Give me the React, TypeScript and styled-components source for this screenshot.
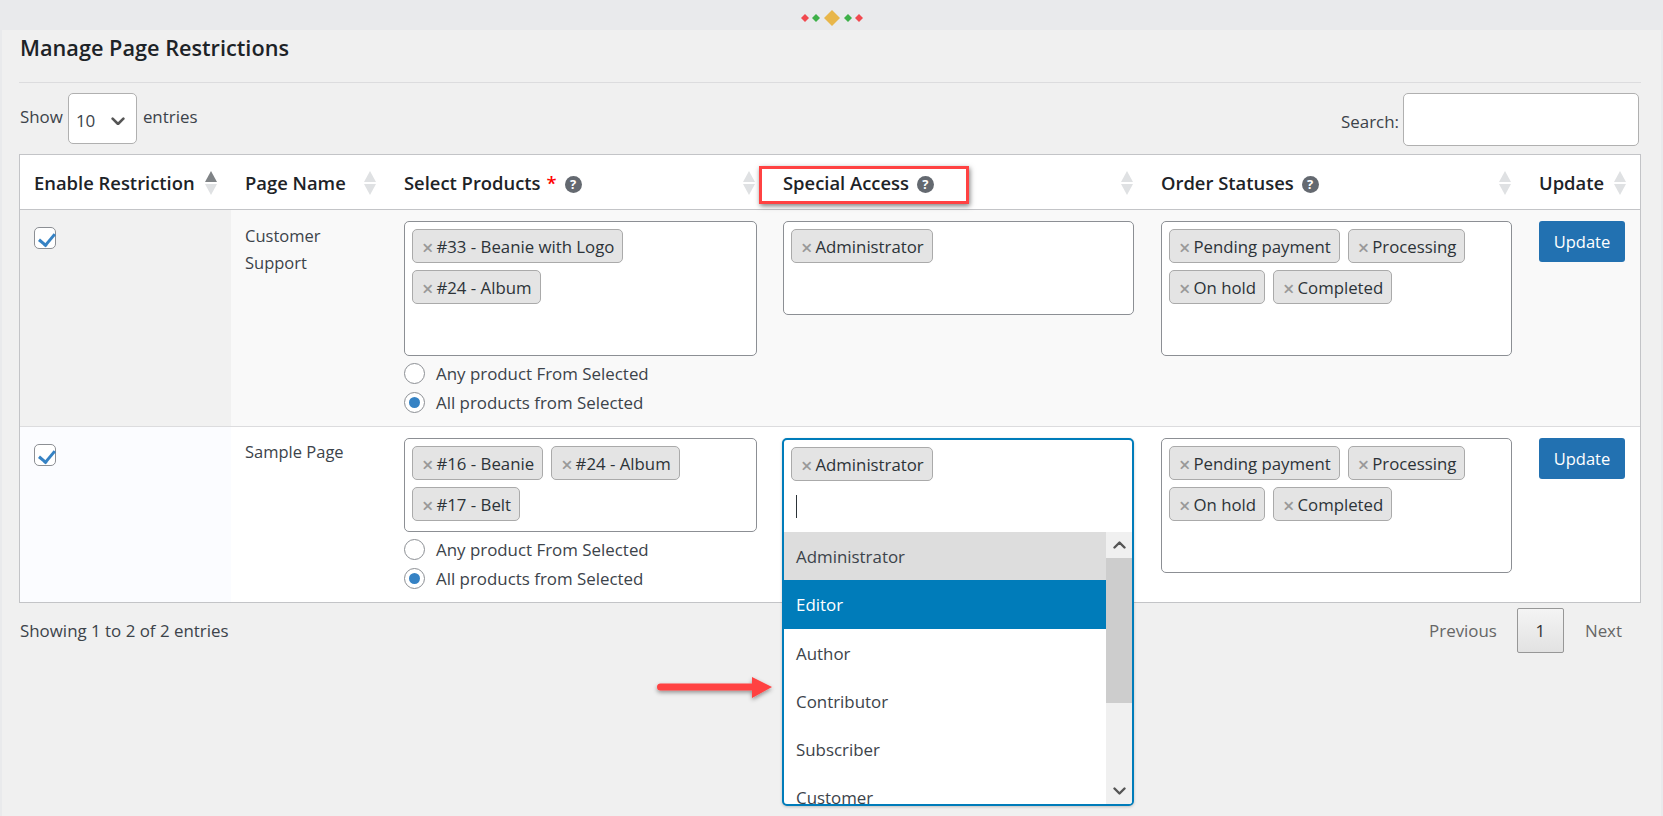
import React from 'react';
import styled, { createGlobalStyle } from 'styled-components';

const GlobalStyle = createGlobalStyle`
  * { box-sizing: border-box; }
  body {
    margin: 0;
    background: #f0f0f1;
    font-family: "Open Sans", "Noto Sans", sans-serif;
    color: #3c434a;
  }
`;

const Page = styled.div`
  position: relative;
  width: 1663px;
  height: 816px;
  overflow: hidden;
  background: #f0f0f0;
  border-left: 2px solid #e9eaec;
  border-right: 2px solid #e9eaec;
`;

const TopBar = styled.div`
  height: 30px;
  margin: 0 -2px;
  background: #e9eaec;
  display: flex;
  align-items: center;
  justify-content: center;
  padding-top: 6px;
`;

const Content = styled.div`
  padding: 0 20px 0 17px;
`;

const Title = styled.h1`
  margin: 0;
  height: 53px;
  padding: 4px 0 0 1px;
  font-size: 21.7px;
  line-height: 28px;
  font-weight: 600;
  color: #1d2327;
  border-bottom: 1px solid #dcdcde;
`;

const Toolbar = styled.div`
  display: flex;
  justify-content: space-between;
  height: 71px;
  padding: 10px 0 0 1px;
  font-size: 16.9px;
`;

const LengthControl = styled.div`
  display: flex;
  align-items: flex-start;
  gap: 5px;
  line-height: 48px;
`;

const LengthSelect = styled.div`
  width: 69px;
  height: 51px;
  margin-right: 1px;
  padding: 5px 11px 0 7px;
  background: #fff;
  border: 1px solid #b0b0b0;
  border-radius: 5px;
  display: flex;
  align-items: center;
  justify-content: space-between;
  line-height: 20px;
  font-size: 17px;
`;

const SearchControl = styled.label`
  display: flex;
  align-items: flex-start;
  gap: 4px;
  line-height: 58px;
`;

const SearchInput = styled.input`
  width: 236px;
  height: 53px;
  margin-right: 2px;
  background: #fff;
  border: 1px solid #b0b0b0;
  border-radius: 5px;
`;

const TableFrame = styled.div`
  width: 1622px;
  border: 1px solid #c3c4c7;
  background: #fff;
`;

const Table = styled.table`
  width: 1620px;
  table-layout: fixed;
  border-collapse: separate;
  border-spacing: 0;
`;

const HeadCell = styled.th`
  height: 55px;
  padding: 1px 14px 0;
  border-bottom: 1px solid #c3c4c7;
  text-align: left;
  font-size: 18.4px;
  font-weight: 600;
  color: #1d2327;
`;

const HeadInner = styled.div`
  display: flex;
  align-items: center;
  justify-content: space-between;
`;

const HeadLabel = styled.span`
  display: flex;
  align-items: center;
  white-space: nowrap;
`;

const Required = styled.span`
  color: #f00;
  margin-left: 6px;
`;

const HelpIcon = styled.span`
  width: 17px;
  height: 17px;
  margin: 3px 0 0 8px;
  border-radius: 50%;
  background: #646970;
  color: #fff;
  font-size: 13px;
  font-weight: 700;
  line-height: 17px;
  text-align: center;
`;

const Row = styled.tr<{ $first?: boolean }>`
  & > td {
    height: ${p => (p.$first ? '217px' : '175px')};
    background: ${p => (p.$first ? '#f9f9f9' : '#fff')};
    border-bottom: ${p => (p.$first ? '1px solid #dcdcde' : '0')};
  }
  & > td:first-child {
    background: ${p => (p.$first ? '#f1f1f1' : '#fbfcff')};
  }
`;

const Cell = styled.td`
  padding: 11px 12px 0 14px;
  vertical-align: top;
  font-size: 16.9px;
  &:nth-child(n + 4) {
    padding-right: 13px;
  }
`;

const Checkbox = styled.input.attrs({ type: 'checkbox' })`
  appearance: none;
  display: block;
  width: 22px;
  height: 22px;
  margin: 6px 0 0;
  border: 1px solid #8c8f94;
  border-radius: 5px;
  background: #fff;
  position: relative;
  &:checked::before {
    content: '';
    position: absolute;
    left: 7px;
    top: 2px;
    width: 7px;
    height: 13px;
    border: solid #3582c4;
    border-width: 0 3.5px 3.5px 0;
    transform: rotate(40deg);
  }
`;

const PageName = styled.div<{ $first?: boolean }>`
  margin-top: ${p => (p.$first ? '1px' : '0')};
  line-height: 27px;
  font-size: 16.5px;
`;

const SelectBox = styled.div<{ $tall?: boolean }>`
  display: flex;
  flex-wrap: wrap;
  align-content: flex-start;
  gap: 7px 8px;
  min-height: ${p => (p.$tall ? '135px' : '94px')};
  padding: 7px 8px 7px 7px;
  background: #fff;
  border: 1px solid #8c8f94;
  border-radius: 5px;
`;

const Tag = styled.span`
  display: inline-flex;
  align-items: center;
  height: 34px;
  padding: 0 8px 0 9px;
  background: #e4e4e4;
  border: 1px solid #aaa;
  border-radius: 5px;
  font-size: 16.8px;
  color: #2c3338;
  white-space: nowrap;
`;

const TagRemove = styled.span`
  margin: 3px 3px 0 0;
  color: #999;
  font-size: 20px;
  font-weight: 600;
  line-height: 1;
`;

const RadioRow = styled.label`
  display: flex;
  align-items: center;
  gap: 11px;
  height: 29px;
`;

const RadioGroup = styled.div`
  margin-top: 3px;
`;

const Radio = styled.input.attrs({ type: 'radio' })`
  appearance: none;
  flex: none;
  position: relative;
  width: 21px;
  height: 21px;
  margin: 0;
  border: 1px solid #8c8f94;
  border-radius: 50%;
  background: #fff;
  &:checked::before {
    content: '';
    position: absolute;
    left: 4px;
    top: 4px;
    width: 11px;
    height: 11px;
    border-radius: 50%;
    background: #3582c4;
  }
`;

const UpdateButton = styled.button`
  display: block;
  width: 86px;
  height: 41px;
  padding: 0;
  background: #2271b1;
  border: 0;
  border-radius: 3px;
  color: #fff;
  font-family: inherit;
  font-size: 16.5px;
`;

const DropdownAnchor = styled.div`
  position: relative;
  height: 94px;
`;

const Dropdown = styled.div`
  position: absolute;
  left: -1px;
  top: 0;
  z-index: 2;
  width: 352px;
  height: 368px;
  display: flex;
  flex-direction: column;
  background: #fff;
  border: 2px solid #007cba;
  border-radius: 5px;
  overflow: hidden;
  box-shadow: 0 1px 3px rgba(0, 0, 0, 0.2);
`;

const DropdownField = styled.div`
  height: 92px;
  flex: none;
  padding: 7px 7px 0;
`;

const Caret = styled.div`
  width: 1px;
  height: 23px;
  margin: 14px 0 0 5px;
  background: #2c3338;
`;

const DropdownBody = styled.div`
  flex: 1;
  min-height: 0;
  display: flex;
`;

const OptionList = styled.ul`
  flex: 1;
  margin: 0;
  padding: 0;
  list-style: none;
  overflow: hidden;
`;

const Option = styled.li<{ $state?: 'selected' | 'active' }>`
  height: 48.3px;
  padding-left: 12px;
  line-height: 50px;
  font-size: 16.9px;
  background: ${p =>
    p.$state === 'selected' ? '#ddd' : p.$state === 'active' ? '#007cba' : 'transparent'};
  color: ${p => (p.$state === 'active' ? '#fff' : '#3c434a')};
`;

const Scrollbar = styled.div`
  flex: none;
  width: 26px;
  display: flex;
  flex-direction: column;
  background: #f0f0f0;
`;

const ScrollButton = styled.div`
  flex: none;
  height: 26px;
  display: flex;
  align-items: center;
  justify-content: center;
`;

const ScrollThumb = styled.div`
  flex: none;
  height: 145px;
  background: #cdcdcd;
`;

const ScrollTrack = styled.div`
  flex: 1;
`;

const Footer = styled.div`
  display: flex;
  justify-content: space-between;
  padding-left: 1px;
  font-size: 16.9px;
`;

const EntriesInfo = styled.div`
  line-height: 56px;
`;

const Pagination = styled.div`
  display: flex;
  align-items: center;
  height: 50px;
  padding: 5px 19px 0 0;
  color: #666;
`;

const PageLink = styled.span`
  line-height: 44px;
`;

const CurrentPage = styled.span`
  width: 47px;
  height: 45px;
  margin: 0 21px 0 20px;
  line-height: 43px;
  text-align: center;
  color: #333;
  background: linear-gradient(to bottom, #f4f4f4, #e2e2e2);
  border: 1px solid #979797;
  border-radius: 2px;
`;

const Callout = styled.div`
  position: absolute;
  left: 757px;
  top: 166px;
  width: 210px;
  height: 38px;
  border: 3px solid #ff4242;
  box-shadow: 1px 2px 5px rgba(0, 0, 0, 0.5);
  pointer-events: none;
`;

const ArrowMark = styled.svg`
  position: absolute;
  left: 650px;
  top: 670px;
  overflow: visible;
`;

const Logo = () => (
  <svg width="64" height="16" viewBox="0 0 64 16">
    <path d="M5 4l4 4-4 4-4-4z" fill="#f1494f" />
    <path d="M16 4l4 4-4 4-4-4z" fill="#3eb049" />
    <path d="M32 0l8 8-8 8-8-8z" fill="#e8b64a" />
    <path d="M48 4l4 4-4 4-4-4z" fill="#3eb049" />
    <path d="M59 4l4 4-4 4-4-4z" fill="#f1494f" />
  </svg>
);

const SortIcon = ({ active }: { active?: boolean }) => (
  <svg width="12" height="24" viewBox="0 0 12 24">
    <path d="M6 0l6 11H0z" fill={active ? '#7f8386' : '#dfe1e3'} />
    <path d="M6 24l6-11H0z" fill="#dfe1e3" />
  </svg>
);

const Chevron = ({ up, size = 13 }: { up?: boolean; size?: number }) => (
  <svg width={size} height={size * 0.62} viewBox="0 0 13 8">
    <path
      d={up ? 'M1.5 6.5l5-5 5 5' : 'M1.5 1.5l5 5 5-5'}
      fill="none"
      stroke="#555"
      strokeWidth="2.4"
      strokeLinecap="round"
      strokeLinejoin="round"
    />
  </svg>
);

const columns = [211, 159, 379, 378, 378, 115];
const roles = ['Administrator', 'Editor', 'Author', 'Contributor', 'Subscriber', 'Customer'];
const statuses = ['Pending payment', 'Processing', 'On hold', 'Completed'];

const Pill = ({ label }: { label: string }) => (
  <Tag>
    <TagRemove>×</TagRemove>
    {label}
  </Tag>
);

const ProductMode = ({ name }: { name: string }) => (
  <RadioGroup>
    <RadioRow>
      <Radio name={name} />
      Any product From Selected
    </RadioRow>
    <RadioRow>
      <Radio name={name} defaultChecked />
      All products from Selected
    </RadioRow>
  </RadioGroup>
);

const Head = ({ label, required, help, active }: { label: string; required?: boolean; help?: boolean; active?: boolean }) => (
  <HeadCell>
    <HeadInner>
      <HeadLabel>
        {label}
        {required && <Required>*</Required>}
        {help && <HelpIcon>?</HelpIcon>}
      </HeadLabel>
      <SortIcon active={active} />
    </HeadInner>
  </HeadCell>
);

export default function App() {
  return (
    <Page>
      <GlobalStyle />
      <TopBar>
        <Logo />
      </TopBar>
      <Content>
        <Title>Manage Page Restrictions</Title>
        <Toolbar>
          <LengthControl>
            Show
            <LengthSelect>
              10
              <Chevron size={14} />
            </LengthSelect>
            entries
          </LengthControl>
          <SearchControl>
            Search:
            <SearchInput />
          </SearchControl>
        </Toolbar>
        <TableFrame>
          <Table>
            <colgroup>
              {columns.map((w, i) => (
                <col key={i} width={w} />
              ))}
            </colgroup>
            <thead>
              <tr>
                <Head label="Enable Restriction" active />
                <Head label="Page Name" />
                <Head label="Select Products" required help />
                <Head label="Special Access" help />
                <Head label="Order Statuses" help />
                <Head label="Update" />
              </tr>
            </thead>
            <tbody>
              <Row $first>
                <Cell>
                  <Checkbox defaultChecked />
                </Cell>
                <Cell>
                  <PageName $first>
                    Customer
                    <br />
                    Support
                  </PageName>
                </Cell>
                <Cell>
                  <SelectBox $tall>
                    <Pill label="#33 - Beanie with Logo" />
                    <Pill label="#24 - Album" />
                  </SelectBox>
                  <ProductMode name="mode-1" />
                </Cell>
                <Cell>
                  <SelectBox>
                    <Pill label="Administrator" />
                  </SelectBox>
                </Cell>
                <Cell>
                  <SelectBox $tall>
                    {statuses.map(s => (
                      <Pill key={s} label={s} />
                    ))}
                  </SelectBox>
                </Cell>
                <Cell>
                  <UpdateButton>Update</UpdateButton>
                </Cell>
              </Row>
              <Row>
                <Cell>
                  <Checkbox defaultChecked />
                </Cell>
                <Cell>
                  <PageName>Sample Page</PageName>
                </Cell>
                <Cell>
                  <SelectBox>
                    <Pill label="#16 - Beanie" />
                    <Pill label="#24 - Album" />
                    <Pill label="#17 - Belt" />
                  </SelectBox>
                  <ProductMode name="mode-2" />
                </Cell>
                <Cell>
                  <DropdownAnchor>
                    <Dropdown>
                      <DropdownField>
                        <Pill label="Administrator" />
                        <Caret />
                      </DropdownField>
                      <DropdownBody>
                        <OptionList>
                          {roles.map((r, i) => (
                            <Option key={r} $state={i === 0 ? 'selected' : i === 1 ? 'active' : undefined}>
                              {r}
                            </Option>
                          ))}
                        </OptionList>
                        <Scrollbar>
                          <ScrollButton>
                            <Chevron up />
                          </ScrollButton>
                          <ScrollThumb />
                          <ScrollTrack />
                          <ScrollButton>
                            <Chevron />
                          </ScrollButton>
                        </Scrollbar>
                      </DropdownBody>
                    </Dropdown>
                  </DropdownAnchor>
                </Cell>
                <Cell>
                  <SelectBox $tall>
                    {statuses.map(s => (
                      <Pill key={s} label={s} />
                    ))}
                  </SelectBox>
                </Cell>
                <Cell>
                  <UpdateButton>Update</UpdateButton>
                </Cell>
              </Row>
            </tbody>
          </Table>
        </TableFrame>
        <Footer>
          <EntriesInfo>Showing 1 to 2 of 2 entries</EntriesInfo>
          <Pagination>
            <PageLink>Previous</PageLink>
            <CurrentPage>1</CurrentPage>
            <PageLink>Next</PageLink>
          </Pagination>
        </Footer>
      </Content>
      <Callout />
      <ArrowMark width="125" height="32" viewBox="0 0 125 32">
        <defs>
          <filter id="arrow-shadow" x="-10%" y="-50%" width="120%" height="200%">
            <feDropShadow dx="0" dy="2" stdDeviation="2" floodColor="#000" floodOpacity="0.4" />
          </filter>
        </defs>
        <path
          d="M8.5 13.5H100V7l20 10-20 11v-7.500H8.500a3.500 3.500 0 0 1 0-7z"
          fill="#ff4242"
          filter="url(#arrow-shadow)"
        />
      </ArrowMark>
    </Page>
  );
}
